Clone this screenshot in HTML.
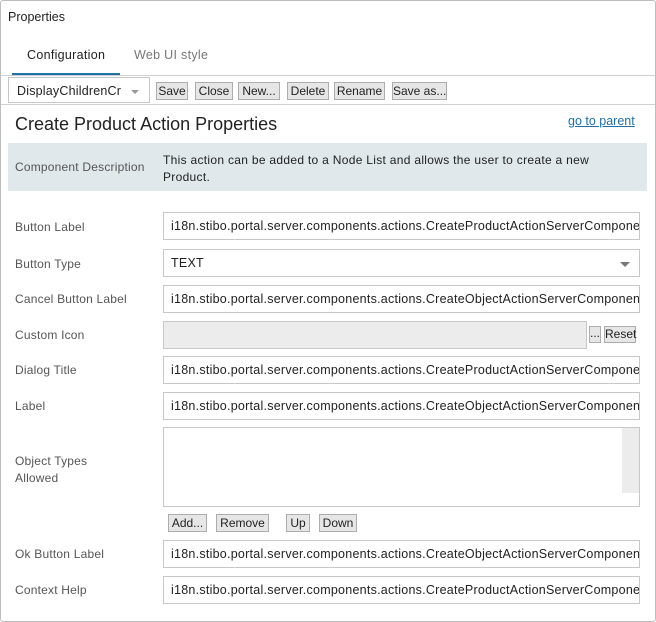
<!DOCTYPE html>
<html><head><style>
body{margin:0;width:656px;height:622px;overflow:hidden;background:#fff;font-family:"Liberation Sans",sans-serif;font-size:12px;color:#333;position:relative}
.a{position:absolute;white-space:nowrap}
.frame{position:absolute;left:0;top:0;width:654px;height:620px;border:1px solid #bdbdbd;border-radius:3px}
.btn{position:absolute;top:82px;height:18px;background:#e6e6e6;border:1px solid #adadad;font-size:12px;line-height:17px;text-align:center;color:#222;box-sizing:border-box;white-space:nowrap;overflow:hidden}
.lbl{position:absolute;left:15px;color:#555;font-size:12px;letter-spacing:0.2px}
.inp{position:absolute;left:163px;width:477px;height:28px;border:1px solid #c8c8c8;box-sizing:border-box;font-size:12.5px;letter-spacing:0.25px;line-height:26px;padding-left:7px;color:#222;overflow:hidden;white-space:nowrap}
.sb{position:absolute;top:514px;height:18px;background:#e6e6e6;border:1px solid #adadad;box-sizing:border-box;line-height:16px;text-align:center;color:#222;white-space:nowrap}
</style></head><body>
<div class="frame"></div>
<div class="a" style="left:8px;top:10px;font-size:12.5px;color:#222">Properties</div>
<div class="a" style="left:27px;top:48px;font-size:12.5px;color:#222;letter-spacing:0.3px">Configuration</div>
<div class="a" style="left:134px;top:48px;font-size:12.5px;color:#777;letter-spacing:0.3px">Web UI style</div>
<div class="a" style="left:12px;top:73px;width:108px;height:2px;background:#1f6fa8"></div>
<div class="a" style="left:1px;top:75px;width:654px;height:1px;background:#d0d0d0"></div>
<div class="a" style="left:8px;top:77px;width:142px;height:26px;border:1px solid #c8c8c8;box-sizing:border-box"></div>
<div class="a" style="left:17px;top:84px;font-size:12.5px;color:#222;letter-spacing:0.2px">DisplayChildrenCr</div>
<div class="a" style="left:131px;top:90px;width:0;height:0;border-left:4px solid transparent;border-right:4px solid transparent;border-top:4px solid #999"></div>
<div class="btn" style="left:156px;width:32px">Save</div>
<div class="btn" style="left:195px;width:38px">Close</div>
<div class="btn" style="left:238px;width:42px">New...</div>
<div class="btn" style="left:287px;width:42px">Delete</div>
<div class="btn" style="left:334px;width:51px">Rename</div>
<div class="btn" style="left:392px;width:55px">Save as...</div>
<div class="a" style="left:1px;top:104px;width:654px;height:1px;background:#d0d0d0"></div>
<div class="a" style="left:15px;top:114px;font-size:18px;color:#222">Create Product Action Properties</div>
<div class="a" style="left:568px;top:114px;font-size:12.5px;color:#1f6fa8;text-decoration:underline">go to parent</div>
<div class="a" style="left:8px;top:143px;width:639px;height:48px;background:#e0e8eb"></div>
<div class="a" style="left:15px;top:160px;color:#555;letter-spacing:0.2px">Component Description</div>
<div class="a" style="left:163px;top:152px;color:#222;line-height:17px;font-size:12px;letter-spacing:0.3px">This action can be added to a Node List and allows the user to create a new<br>Product.</div>
<div class="lbl" style="top:220px">Button Label</div>
<div class="inp" style="top:212px">i18n.stibo.portal.server.components.actions.CreateProductActionServerComponent</div>
<div class="lbl" style="top:257px">Button Type</div>
<div class="inp" style="top:249px">TEXT</div>
<div class="a" style="left:620px;top:262px;border-left:5px solid transparent;border-right:5px solid transparent;border-top:5px solid #777"></div>
<div class="lbl" style="top:292px">Cancel Button Label</div>
<div class="inp" style="top:285px">i18n.stibo.portal.server.components.actions.CreateObjectActionServerComponent</div>
<div class="lbl" style="top:328px">Custom Icon</div>
<div class="inp" style="top:321px;width:424px;background:#ececec"></div>
<div class="sb" style="left:589px;top:326px;width:12px;height:17px;line-height:13px">...</div>
<div class="sb" style="left:604px;top:326px;width:32px;height:17px;line-height:15px">Reset</div>
<div class="lbl" style="top:363px">Dialog Title</div>
<div class="inp" style="top:356px">i18n.stibo.portal.server.components.actions.CreateProductActionServerComponent</div>
<div class="lbl" style="top:399px">Label</div>
<div class="inp" style="top:392px">i18n.stibo.portal.server.components.actions.CreateObjectActionServerComponent</div>
<div class="lbl" style="top:453px;line-height:17px">Object Types<br>Allowed</div>
<div class="a" style="left:163px;top:427px;width:477px;height:80px;border:1px solid #c8c8c8;box-sizing:border-box"></div>
<div class="a" style="left:622px;top:428px;width:17px;height:65px;background:#ececec"></div>
<div class="sb" style="left:168px;width:39px">Add...</div>
<div class="sb" style="left:216px;width:53px">Remove</div>
<div class="sb" style="left:286px;width:24px">Up</div>
<div class="sb" style="left:319px;width:38px">Down</div>
<div class="lbl" style="top:547px">Ok Button Label</div>
<div class="inp" style="top:540px">i18n.stibo.portal.server.components.actions.CreateObjectActionServerComponent</div>
<div class="lbl" style="top:583px">Context Help</div>
<div class="inp" style="top:576px">i18n.stibo.portal.server.components.actions.CreateProductActionServerComponent</div>
</body></html>
